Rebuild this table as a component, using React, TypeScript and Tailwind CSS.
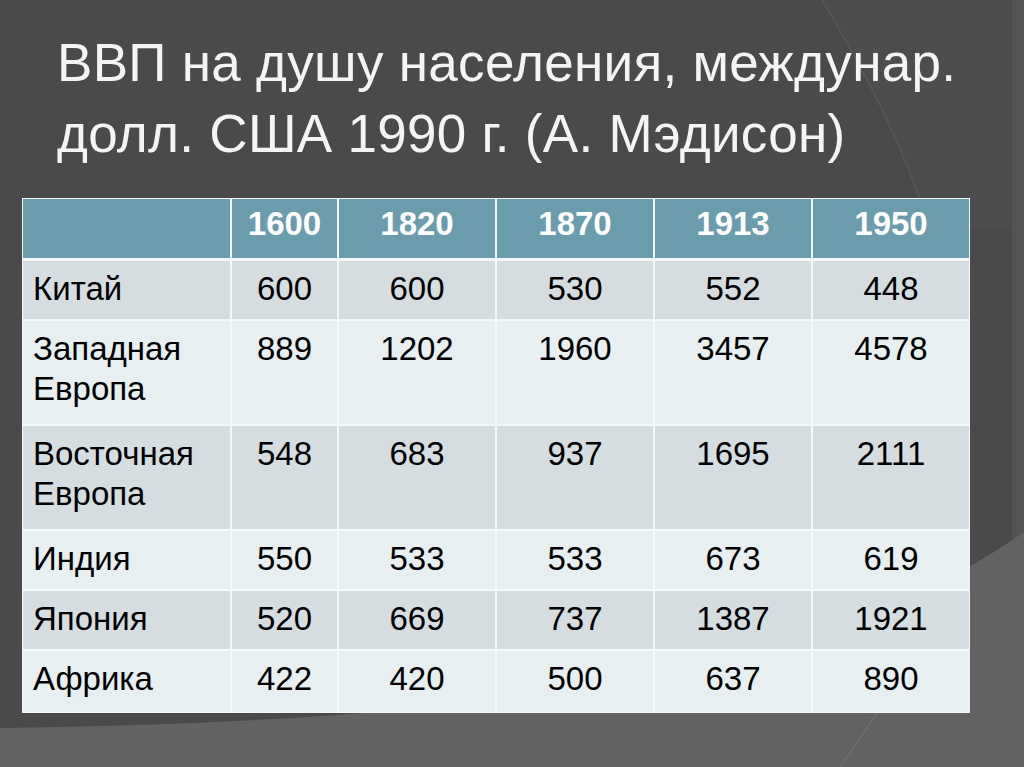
const years = ["1600", "1820", "1870", "1913", "1950"];

const rows: { name: string[]; values: string[]; height: string; tone: "dark" | "light" }[] = [
  { name: ["Китай"], values: ["600", "600", "530", "552", "448"], height: "h-[58px]", tone: "dark" },
  { name: ["Западная", "Европа"], values: ["889", "1202", "1960", "3457", "4578"], height: "h-[103px]", tone: "light" },
  { name: ["Восточная", "Европа"], values: ["548", "683", "937", "1695", "2111"], height: "h-[103px]", tone: "dark" },
  { name: ["Индия"], values: ["550", "533", "533", "673", "619"], height: "h-[58px]", tone: "light" },
  { name: ["Япония"], values: ["520", "669", "737", "1387", "1921"], height: "h-[58px]", tone: "dark" },
  { name: ["Африка"], values: ["422", "420", "500", "637", "890"], height: "h-[61px]", tone: "light" },
];

function Backdrop() {
  return (
    <svg className="absolute inset-0" width="1024" height="767" viewBox="0 0 1024 767">
      <rect width="1024" height="767" fill="#4a4a4a" />
      <path d="M822 0 C 870 80, 905 150, 930 230 L1024 230 L1024 0 Z" fill="#4d4d4d" />
      <path d="M822 0 C 870 80, 905 150, 930 230" fill="none" stroke="#575757" strokeWidth="1.5" />
      <rect x="1012" y="0" width="12" height="540" fill="#545454" />
      <path d="M0 728 C 420 722, 800 690, 1024 532 L1024 767 L0 767 Z" fill="#626262" />
      <path d="M878 712 L840 767" stroke="#6d6d6d" strokeWidth="1.5" />
    </svg>
  );
}

export default function App() {
  return (
    <div
      className="relative w-[1024px] h-[767px] overflow-hidden"
      style={{ fontFamily: '"Liberation Sans", Arial, sans-serif' }}
    >
      <Backdrop />
      <div className="relative">
        <h1 className="pt-[27px] pl-[57px] text-[53px] leading-[71px] font-normal tracking-[0.3px] text-[#f4f4f4]">
          ВВП на душу населения, междунар.
          <br />
          долл. США 1990 г. (А. Мэдисон)
        </h1>

        <div className="ml-[22px] mt-[29px] w-[948px] bg-[#f3f8f8] p-[1px]">
          <div className="grid grid-cols-[207px_105px_156px_156px_156px_156px] gap-x-[2px]">
            <div className="h-[59px] bg-[#6a9cad]" />
            {years.map((y) => (
              <div
                key={y}
                className="h-[59px] bg-[#6a9cad] pt-[5px] text-center text-[33px] leading-[40px] font-bold text-white"
              >
                {y}
              </div>
            ))}
          </div>

          <div className="mt-[3px] flex flex-col gap-y-[2px]">
            {rows.map((row) => {
              const bg = row.tone === "dark" ? "bg-[#d5dde1]" : "bg-[#e7eff0]";
              return (
                <div
                  key={row.name.join(" ")}
                  className="grid grid-cols-[207px_105px_156px_156px_156px_156px] gap-x-[2px]"
                >
                  <div className={`${row.height} ${bg} pl-[10px] pt-[8px] text-[33px] leading-[40px] text-black`}>
                    {row.name.map((line) => (
                      <div key={line}>{line}</div>
                    ))}
                  </div>
                  {row.values.map((v, i) => (
                    <div
                      key={i}
                      className={`${row.height} ${bg} pt-[8px] text-center text-[33px] leading-[40px] text-black`}
                    >
                      {v}
                    </div>
                  ))}
                </div>
              );
            })}
          </div>
        </div>
      </div>
    </div>
  );
}
